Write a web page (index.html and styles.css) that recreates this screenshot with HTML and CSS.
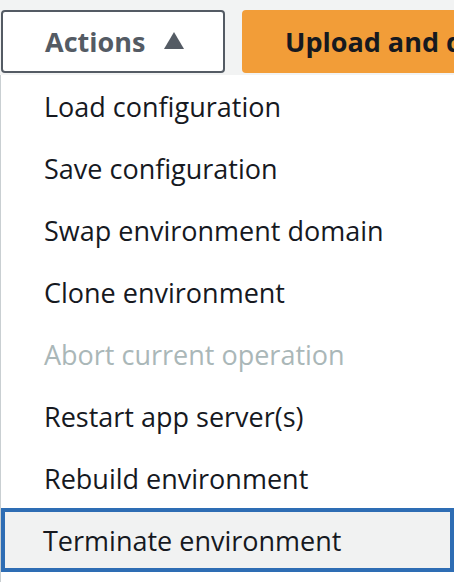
FILE: index.html
```html
<!DOCTYPE html>
<html>
<head>
<meta charset="utf-8">
<link rel="stylesheet" href="styles.css">
</head>
<body>
<div class="toolbar">
  <button class="btn btn-actions">Actions <svg class="caret" width="20" height="17" viewBox="0 0 20 17"><polygon points="10,0 20,17 0,17" fill="#545b64"/></svg></button>
  <button class="btn btn-primary">Upload and deploy</button>
</div>
<ul class="menu">
  <li class="item">Load configuration</li>
  <li class="item">Save configuration</li>
  <li class="item">Swap environment domain</li>
  <li class="item">Clone environment</li>
  <li class="item disabled">Abort current operation</li>
  <li class="item">Restart app server(s)</li>
  <li class="item">Rebuild environment</li>
  <li class="item active">Terminate environment</li>
</ul>
</body>
</html>
```
FILE: styles.css
```css
html, body {
  margin: 0;
  padding: 0;
  background: #f2f3f3;
  font-family: "Open Sans", "Noto Sans", sans-serif;
  overflow: hidden;
  height: 100%;
}
.toolbar {
  display: flex;
  gap: 17px;
  padding: 10px 0 0 1px;
  white-space: nowrap;
  overflow: hidden;
}
.btn {
  flex: none;
  height: 63px;
  box-sizing: border-box;
  border-radius: 4px;
  font-family: inherit;
  font-size: 27px;
  font-weight: 700;
  display: flex;
  align-items: center;
  cursor: pointer;
}
.btn-actions {
  width: 224px;
  background: #fff;
  border: 2px solid #545b64;
  color: #545b64;
  padding: 0 0 0 42px;
}
.caret {
  margin-left: 19px;
  margin-top: -3px;
}
.btn-primary {
  width: 300px;
  background: #f29d38;
  border: 2px solid #f29d38;
  color: #16191f;
  padding: 0 0 0 41px;
}
.menu {
  list-style: none;
  margin: 2px 0 0 0;
  padding: 0;
  background: #fff;
  border-left: 1px solid #c9cfd2;
  height: calc(100% - 75px);
  box-sizing: border-box;
}
.item {
  height: 62px;
  box-sizing: border-box;
  display: flex;
  align-items: center;
  padding-left: 43px;
  font-size: 27px;
  color: #16191f;
}
.item.disabled {
  color: #aab7b8;
}
.item.active {
  background: #f1f2f2;
  border: 4px solid #2e6db4;
  margin-top: -1px;
  padding-left: 38px;
  height: 64px;
}
```
